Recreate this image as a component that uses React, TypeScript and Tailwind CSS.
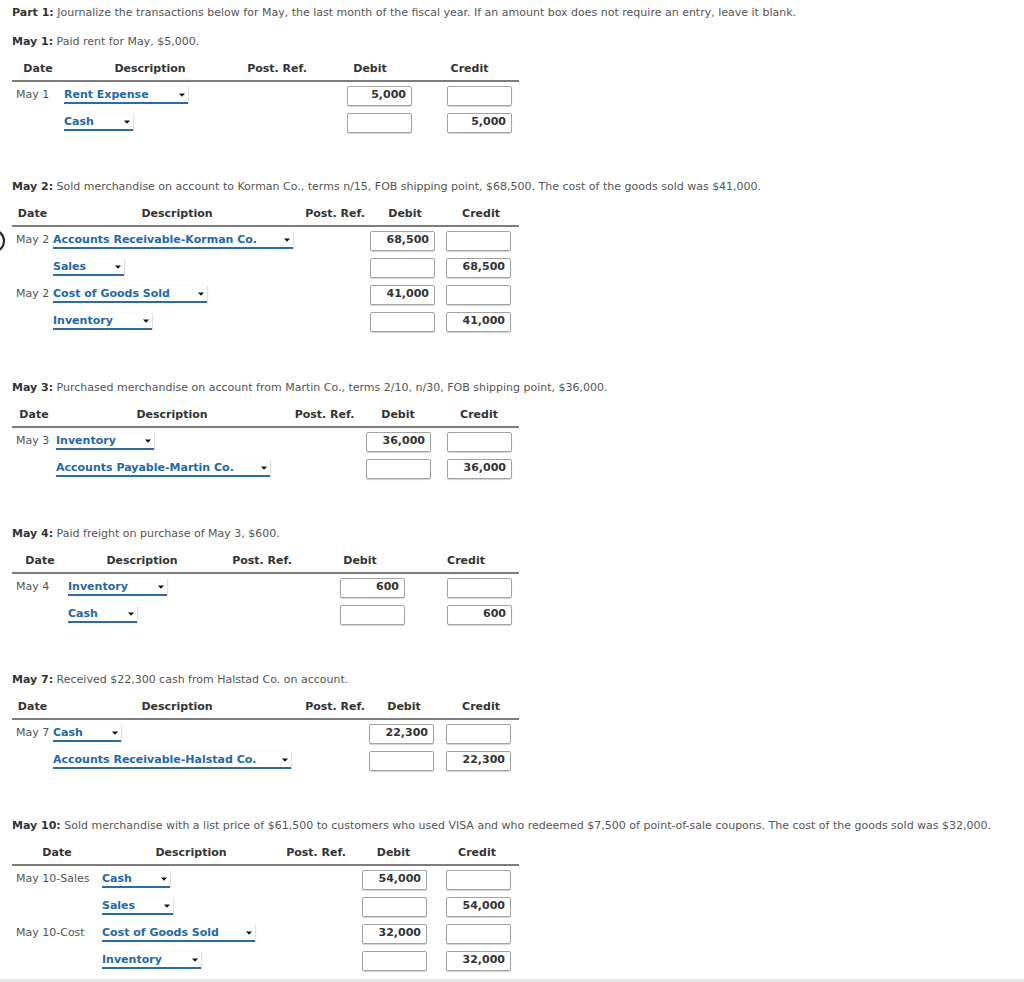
import React from "react";

type Row = { date?: string; account: string; selW: number; debit?: string; credit?: string };
type Section = {
  title: string;
  text: string;
  mt: string;
  cols: [number, number, number, number, number];
  debitOff: number;
  creditOff: number;
  rows: Row[];
};

const sections: Section[] = [
  {
    title: "May 1:",
    text: "Paid rent for May, $5,000.",
    mt: "mt-[13px]",
    cols: [52, 172, 82, 104, 95],
    debitOff: 29,
    creditOff: 25,
    rows: [
      { date: "May 1", account: "Rent Expense", selW: 124, debit: "5,000" },
      { account: "Cash", selW: 69, credit: "5,000" },
    ],
  },
  {
    title: "May 2:",
    text: "Sold merchandise on account to Korman Co., terms n/15, FOB shipping point, $68,500. The cost of the goods sold was $41,000.",
    mt: "mt-[43px]",
    cols: [41, 248, 68, 72, 80],
    debitOff: 1,
    creditOff: 5,
    rows: [
      { date: "May 2", account: "Accounts Receivable-Korman Co.", selW: 240, debit: "68,500" },
      { account: "Sales", selW: 71, credit: "68,500" },
      { date: "May 2", account: "Cost of Goods Sold", selW: 154, debit: "41,000" },
      { account: "Inventory", selW: 99, credit: "41,000" },
    ],
  },
  {
    title: "May 3:",
    text: "Purchased merchandise on account from Martin Co., terms 2/10, n/30, FOB shipping point, $36,000.",
    mt: "mt-[45px]",
    cols: [44, 232, 73, 74, 88],
    debitOff: 5,
    creditOff: 12,
    rows: [
      { date: "May 3", account: "Inventory", selW: 98, debit: "36,000" },
      { account: "Accounts Payable-Martin Co.", selW: 214, credit: "36,000" },
    ],
  },
  {
    title: "May 4:",
    text: "Paid freight on purchase of May 3, $600.",
    mt: "mt-[44px]",
    cols: [56, 148, 92, 104, 108],
    debitOff: 32,
    creditOff: 35,
    rows: [
      { date: "May 4", account: "Inventory", selW: 99, debit: "600" },
      { account: "Cash", selW: 69, credit: "600" },
    ],
  },
  {
    title: "May 7:",
    text: "Received $22,300 cash from Halstad Co. on account.",
    mt: "mt-[44px]",
    cols: [41, 248, 68, 70, 84],
    debitOff: 0,
    creditOff: 7,
    rows: [
      { date: "May 7", account: "Cash", selW: 68, debit: "22,300" },
      { account: "Accounts Receivable-Halstad Co.", selW: 238, credit: "22,300" },
    ],
  },
  {
    title: "May 10:",
    text: "Sold merchandise with a list price of $61,500 to customers who used VISA and who redeemed $7,500 of point-of-sale coupons. The cost of the goods sold was $32,000.",
    mt: "mt-[44px]",
    cols: [90, 178, 72, 83, 84],
    debitOff: 10,
    creditOff: 11,
    rows: [
      { date: "May 10-Sales", account: "Cash", selW: 68, debit: "54,000" },
      { account: "Sales", selW: 71, credit: "54,000" },
      { date: "May 10-Cost", account: "Cost of Goods Sold", selW: 153, debit: "32,000" },
      { account: "Inventory", selW: 99, credit: "32,000" },
    ],
  },
];

function Select({ label, w }: { label: string; w: number }) {
  return (
    <div
      className="flex h-[17px] items-center justify-between border-b-2 border-[#2c6ba3] bg-white pr-[3px] shadow-[1px_0_1px_rgba(0,0,0,0.12)]"
      style={{ width: w }}
    >
      <span className="font-bold text-[11px] leading-[14px] text-[#2468a8]">{label}</span>
      <svg width="6" height="4" viewBox="0 0 6 4" className="shrink-0">
        <path d="M0 0.5 L6 0.5 L3 3.8 Z" fill="#111" />
      </svg>
    </div>
  );
}

function Amount({ value }: { value?: string }) {
  return (
    <div className="flex h-[20px] w-[65px] items-center justify-end rounded-[2px] border border-[#a3a3a3] bg-white pr-[5px] shadow-[0_1px_1px_rgba(0,0,0,0.18)]">
      <span className="font-bold text-[11px] text-[#333]">{value ?? ""}</span>
    </div>
  );
}

function Table({ s }: { s: Section }) {
  const tpl = s.cols.map((c) => `${c}px`).join(" ");
  const headers = ["Date", "Description", "Post. Ref.", "Debit", "Credit"];
  return (
    <div className={s.mt}>
      <p className="h-[16px] leading-[16px] text-[11px] text-[#555]">
        <span className="font-bold text-[#333]">{s.title}</span> {s.text}
      </p>
      <div className="mt-[8px] grid h-[22px] items-center" style={{ gridTemplateColumns: tpl }}>
        {headers.map((h) => (
          <div key={h} className="text-center font-bold text-[11px] text-[#333]">
            {h}
          </div>
        ))}
      </div>
      <div className="h-[2px] w-[507px] bg-[#7d7d7d]" />
      {s.rows.map((r, i) => (
        <div key={i} className="grid h-[27px] items-center" style={{ gridTemplateColumns: tpl }}>
          <div className="pl-[4px] text-[11px] text-[#555] whitespace-nowrap">{r.date ?? ""}</div>
          <div>
            <Select label={r.account} w={r.selW} />
          </div>
          <div />
          <div style={{ paddingLeft: s.debitOff }}>
            <Amount value={r.debit} />
          </div>
          <div style={{ paddingLeft: s.creditOff }}>
            <Amount value={r.credit} />
          </div>
        </div>
      ))}
    </div>
  );
}

export default function App() {
  return (
    <div
      className="relative h-[982px] w-[1024px] overflow-hidden bg-white"
      style={{ fontFamily: '"DejaVu Sans", Verdana, sans-serif' }}
    >
      <div className="pl-[12px] pt-[5px]">
        <p className="h-[16px] leading-[16px] text-[11px] text-[#555]">
          <span className="font-bold text-[#333]">Part 1:</span> Journalize the transactions below for May, the last
          month of the fiscal year. If an amount box does not require an entry, leave it blank.
        </p>
        {sections.map((s) => (
          <Table key={s.title} s={s} />
        ))}
      </div>
      <div className="absolute bottom-0 left-0 h-[3px] w-full bg-[#e6e6e6]" />
      <div className="absolute left-[-19px] top-[229px] h-[24px] w-[24px] rounded-full border-2 border-[#222]" />
    </div>
  );
}
